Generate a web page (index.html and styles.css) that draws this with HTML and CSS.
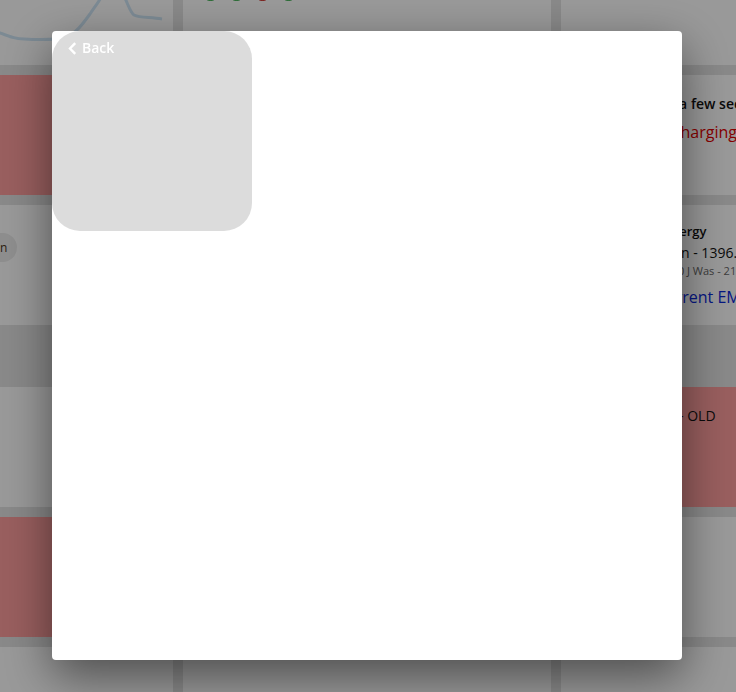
FILE: index.html
```html
<!DOCTYPE html>
<html>
<head>
<meta charset="utf-8">
<link rel="stylesheet" href="styles.css">
</head>
<body>
<div class="dashboard">
  <section class="grid first">
    <div class="card">
      <svg class="chart" width="173" height="65" viewBox="0 0 173 65">
        <path d="M-2 32 C 8 36, 14 39, 24 39 C 40 40, 56 40, 66 37 C 76 34, 84 22, 90 14 C 94 8, 98 3, 102 -4" fill="none" stroke="#cfe6f6" stroke-width="3"/>
        <path d="M124 -4 C 128 4, 130 12, 134 15 C 140 18, 150 17, 162 19" fill="none" stroke="#cfe6f6" stroke-width="3"/>
      </svg>
    </div>
    <div class="card">
      <div class="dots">
        <span class="dot green"></span><span class="dot green"></span><span class="dot red"></span><span class="dot green"></span>
      </div>
    </div>
    <div class="card"></div>

    <div class="card alert"></div>
    <div class="card"></div>
    <div class="card">
      <div class="info">
        <div class="updated">Last updated a few seconds ago</div>
        <div class="status">Car status: Charging</div>
      </div>
    </div>

    <div class="card">
      <div class="badge-row"><span class="badge">Clean</span></div>
    </div>
    <div class="card"></div>
    <div class="card">
      <div class="info">
        <div class="title">Grid Import Energy</div>
        <div class="value">Total Generation - 1396.8 kWh</div>
        <div class="sub">Now using - 1250 J Was - 2130 J</div>
        <div class="link">Open the Current EMS</div>
      </div>
    </div>
  </section>

  <section class="grid second">
    <div class="card"></div>
    <div class="card"></div>
    <div class="card alert">
      <div class="info"><div class="old">Solar Inverter - OLD</div></div>
    </div>

    <div class="card alert"></div>
    <div class="card"></div>
    <div class="card"></div>

    <div class="card"></div>
    <div class="card"></div>
    <div class="card"></div>
  </section>
</div>

<div class="overlay"></div>

<div class="modal">
  <div class="panel">
    <a class="back" href="#">
      <svg class="chev" width="9" height="13" viewBox="0 0 9 13"><path d="M7.2 1.2 L2 6.5 L7.2 11.8" fill="none" stroke="#fff" stroke-width="2.4"/></svg>
      <span>Back</span>
    </a>
  </div>
</div>
</body>
</html>
```

FILE: styles.css
```css
html, body {
  margin: 0;
  padding: 0;
  height: 100%;
  overflow: hidden;
}
body {
  background: #e4e4e4;
  font-family: "Open Sans", "Noto Sans", sans-serif;
  color: #111;
}
.dashboard {
  display: flex;
  flex-direction: column;
}
.grid {
  display: grid;
  grid-template-columns: 173px 368px 175px;
  grid-auto-rows: 120px;
  gap: 10px;
}
.grid.first {
  margin-top: -55px;
}
.grid.second {
  margin-top: 62px;
}
.card {
  background: #fff;
  overflow: hidden;
  position: relative;
}
.card.alert {
  background: #ff9e9e;
}
.chart {
  display: block;
  margin-top: 55px;
}
.dots {
  display: flex;
  gap: 9px;
  padding: 39px 0 0 19px;
}
.dot {
  width: 15px;
  height: 15px;
  border-radius: 50%;
  border: 1.5px solid transparent;
}
.dot.green { background: #45c25a; border-color: #3aad4e; }
.dot.red { background: #e0302a; border-color: #c82a25; }

.badge-row {
  display: flex;
  padding: 28px 0 0 0;
  margin-left: -36px;
}
.badge {
  background: #ececec;
  color: #4a3418;
  font-size: 12px;
  line-height: 19px;
  padding: 5px 10px 5px 12px;
  border-radius: 15px;
}

.info {
  padding: 0 0 0 26px;
  white-space: nowrap;
}
.updated {
  margin-top: 19px;
  font-size: 14px;
  line-height: 19px;
  font-weight: 600;
}
.status {
  margin-top: 8px;
  font-size: 16px;
  line-height: 22px;
  color: #e00000;
}
.title {
  margin-top: 17px;
  font-size: 13px;
  line-height: 18px;
  font-weight: 600;
}
.value {
  margin-top: 3px;
  margin-left: -7px;
  font-size: 14px;
  line-height: 20px;
}
.sub {
  margin-left: 9px;
  font-size: 11px;
  line-height: 15px;
  color: #666;
}
.link {
  margin-top: 8px;
  margin-left: -5px;
  font-size: 16px;
  line-height: 22px;
  color: #0a28d8;
}
.old {
  margin-top: 19px;
  font-size: 14px;
  line-height: 20px;
}

.overlay {
  position: fixed;
  inset: 0;
  background: rgba(0, 0, 0, 0.4);
}
.modal {
  position: fixed;
  left: 52px;
  top: 31px;
  width: 630px;
  height: 629px;
  background: #fff;
  border-radius: 4px;
  box-shadow: 0 16px 48px rgba(0, 0, 0, 0.5);
}
.panel {
  width: 200px;
  height: 200px;
  background: #dcdcdc;
  border-radius: 28px;
  box-sizing: border-box;
  padding: 7px 16px;
}
.back {
  display: flex;
  align-items: center;
  gap: 5px;
  color: #fff;
  text-decoration: none;
  font-size: 14px;
  line-height: 20px;
  font-weight: 600;
}
.chev {
  display: block;
}
```
